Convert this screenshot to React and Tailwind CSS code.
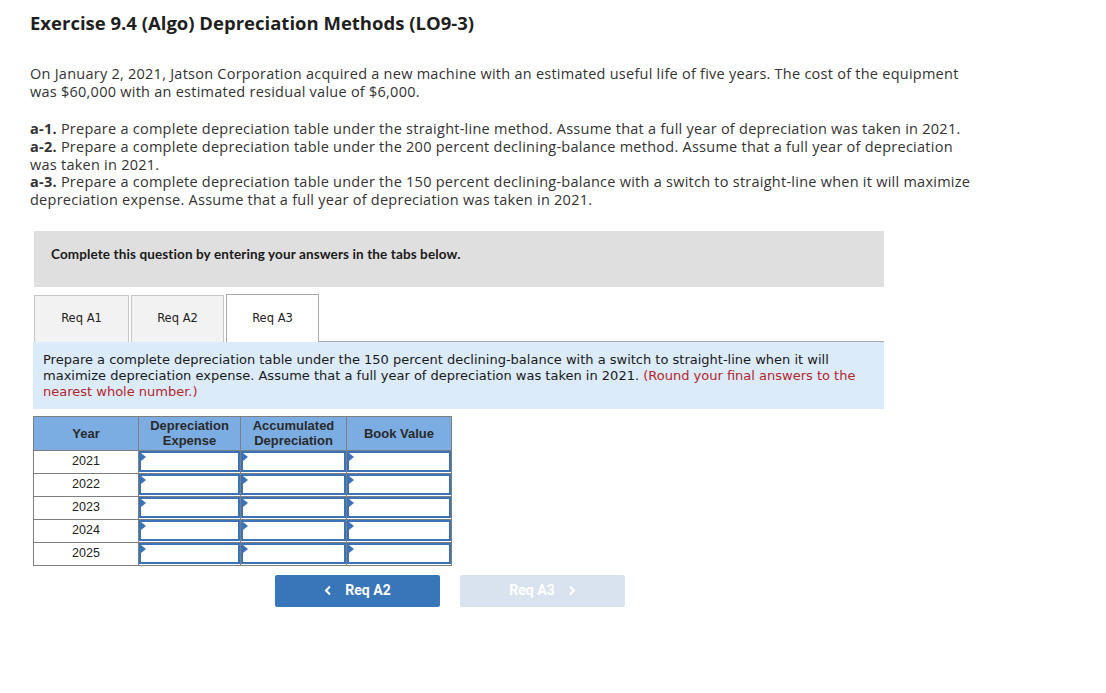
import React from "react";

const years = ["2021", "2022", "2023", "2024", "2025"];

function InputCell() {
  return (
    <td className="border border-[#7f7f7f] p-0 h-[23px]">
      <div className="relative h-[21px] border-2 border-[#3b73b9] bg-white">
        <span className="absolute left-0 top-0 w-0 h-0 border-y-[4px] border-y-transparent border-l-[5px] border-l-[#3b73b9]" />
      </div>
    </td>
  );
}

export default function App() {
  return (
    <div className="min-h-[693px] w-[1106px] bg-white text-[#2b2b2b]">
      <div className="pl-[30px] pt-[12px]">
        <h1 className="text-[18.5px] leading-[22px] font-bold text-[#1f1f1f] font-['Open_Sans',sans-serif]">
          Exercise 9.4 (Algo) Depreciation Methods (LO9-3)
        </h1>

        <div className="mt-[31px] text-[14.5px] tracking-[0.25px] leading-[18px] font-['Open_Sans',sans-serif] text-[#333]">
          <p>
            On January 2, 2021, Jatson Corporation acquired a new machine with an estimated useful life of five years. The cost of the equipment
            <br />
            was $60,000 with an estimated residual value of $6,000.
          </p>
          <p className="mt-[19px] leading-[17.75px]">
            <b>a-1.</b> Prepare a complete depreciation table under the straight-line method. Assume that a full year of depreciation was taken in 2021.
            <br />
            <b>a-2.</b> Prepare a complete depreciation table under the 200 percent declining-balance method. Assume that a full year of depreciation
            <br />
            was taken in 2021.
            <br />
            <b>a-3.</b> Prepare a complete depreciation table under the 150 percent declining-balance with a switch to straight-line when it will maximize
            <br />
            depreciation expense. Assume that a full year of depreciation was taken in 2021.
          </p>
        </div>
      </div>

      <div className="ml-[33px] mt-[22px] w-[851px]">
        <div className="ml-[1px] h-[56px] bg-[#dfdfdf] pl-[17px] pt-[10px]">
          <span className="text-[13.5px] tracking-[0.12px] font-bold text-[#1a1a1a] font-['Lato',sans-serif]">
            Complete this question by entering your answers in the tabs below.
          </span>
        </div>

        <div className="mt-[7px] flex items-end h-[48px] font-['DejaVu_Sans',sans-serif] text-[11.5px] text-[#222]">
          <div className="ml-[1px] w-[95px] h-[47px] bg-[#f2f2f2] border border-[#c6c6c6] border-b-0 flex items-center justify-center">
            Req A1
          </div>
          <div className="ml-[2px] w-[93px] h-[47px] bg-[#f2f2f2] border border-[#c6c6c6] border-b-0 flex items-center justify-center">
            Req A2
          </div>
          <div className="ml-[2px] w-[93px] h-[48px] bg-white border border-[#a9a9a9] border-b-0 flex items-center justify-center">
            Req A3
          </div>
          <div className="flex-1 h-[1px] bg-[#a9a9a9]" />
        </div>

        <div className="bg-[#dbebf9] h-[67px] pl-[10px] pt-[10px] font-['DejaVu_Sans',sans-serif] text-[13px] leading-[16px] text-[#1a1a1a]">
          Prepare a complete depreciation table under the 150 percent declining-balance with a switch to straight-line when it will
          <br />
          maximize depreciation expense. Assume that a full year of depreciation was taken in 2021.{" "}
          <span className="text-[#b5262b]">(Round your final answers to the</span>
          <br />
          <span className="text-[#b5262b]">nearest whole number.)</span>
        </div>

        <table className="mt-[7px] border-collapse font-['Liberation_Sans',sans-serif] text-[12.5px] text-[#222] table-fixed">
          <colgroup>
            <col className="w-[105px]" />
            <col className="w-[102px]" />
            <col className="w-[106px]" />
            <col className="w-[105px]" />
          </colgroup>
          <thead>
            <tr className="h-[34px] bg-[#7badE3]">
              <th className="border border-[#7f7f7f] font-bold text-[13px] leading-[15px] text-[#2a2a2a]">Year</th>
              <th className="border border-[#7f7f7f] font-bold text-[13px] leading-[15px] text-[#2a2a2a]">
                Depreciation
                <br />
                Expense
              </th>
              <th className="border border-[#7f7f7f] font-bold text-[13px] leading-[15px] text-[#2a2a2a]">
                Accumulated
                <br />
                Depreciation
              </th>
              <th className="border border-[#7f7f7f] font-bold text-[13px] leading-[15px] text-[#2a2a2a]">Book Value</th>
            </tr>
          </thead>
          <tbody>
            {years.map((y) => (
              <tr key={y} className="h-[23px]">
                <td className="border border-[#7f7f7f] text-center p-0">{y}</td>
                <InputCell />
                <InputCell />
                <InputCell />
              </tr>
            ))}
          </tbody>
        </table>

        <div className="mt-[9px] ml-[242px] flex gap-[20px] font-['Roboto',sans-serif] text-[14px] font-bold text-white">
          <button className="w-[165px] h-[32px] rounded-[2px] bg-[#3875b9] flex items-center justify-center gap-[13px]">
            <svg width="8" height="11" viewBox="0 0 8 11" fill="none">
              <path d="M6 1.5L2 5.5L6 9.5" stroke="white" strokeWidth="2" />
            </svg>
            <span>Req A2</span>
          </button>
          <button className="w-[165px] h-[32px] rounded-[2px] bg-[#d9e3f0] flex items-center justify-center gap-[13px]">
            <span>Req A3</span>
            <svg width="8" height="11" viewBox="0 0 8 11" fill="none">
              <path d="M2 1.5L6 5.5L2 9.5" stroke="white" strokeWidth="2" />
            </svg>
          </button>
        </div>
      </div>
    </div>
  );
}
